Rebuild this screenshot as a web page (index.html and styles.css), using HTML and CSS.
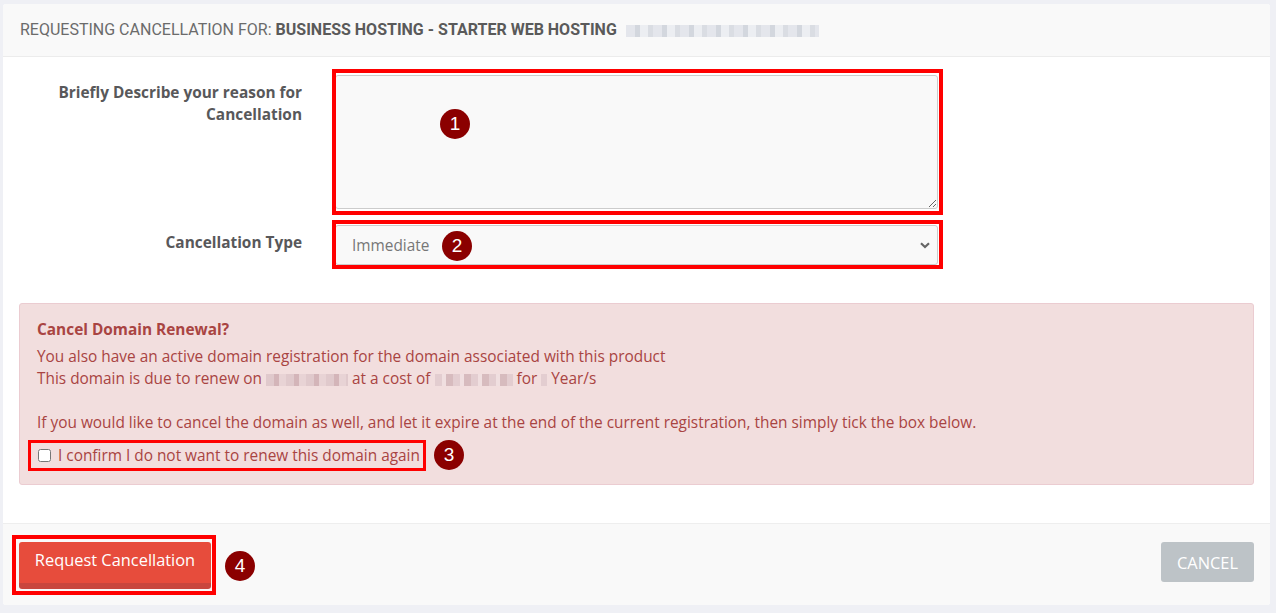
FILE: index.html
```html
<!DOCTYPE html>
<html lang="en">
<head>
    <meta charset="UTF-8">
    <title>Request Cancellation</title>
    <link rel="stylesheet" href="styles.css">
</head>
<body>
    <div class="page">
        <div class="panel">
            <div class="panel-head">
                REQUESTING CANCELLATION FOR: <strong>BUSINESS HOSTING - STARTER WEB HOSTING</strong>
                <span class="redact redact-head"></span>
            </div>

            <form class="panel-body">
                <div class="form-row">
                    <label class="form-label" for="reason">Briefly Describe your reason for Cancellation</label>
                    <div class="field">
                        <textarea id="reason" class="form-control"></textarea>
                        <span class="mark-box box-reason"></span>
                        <span class="marker marker-1">1</span>
                    </div>
                </div>

                <div class="form-row row-type">
                    <label class="form-label" for="type">Cancellation Type</label>
                    <div class="field">
                        <select id="type" class="form-control select">
                            <option>Immediate</option>
                            <option>End of Billing Period</option>
                        </select>
                        <svg class="chevron" width="10" height="7" viewBox="0 0 10 7">
                            <path d="M1 1.2 L5 5 L9 1.2" fill="none" stroke="#666" stroke-width="2.2"/>
                        </svg>
                        <span class="mark-box box-type"></span>
                        <span class="marker marker-2">2</span>
                    </div>
                </div>

                <div class="alert">
                    <h4>Cancel Domain Renewal?</h4>
                    <p>
                        You also have an active domain registration for the domain associated with this product<br>
                        This domain is due to renew on <span class="redact redact-date"></span> at a cost of <span class="redact redact-cost"></span> for <span class="redact redact-year"></span> Year/s<br>
                        <br>
                        If you would like to cancel the domain as well, and let it expire at the end of the current registration, then simply tick the box below.
                    </p>
                    <div class="confirm-row">
                        <label class="confirm">
                            <input type="checkbox"> I confirm I do not want to renew this domain again
                            <span class="mark-box box-confirm"></span>
                        </label>
                        <span class="marker marker-3">3</span>
                    </div>
                </div>
            </form>

            <div class="panel-foot">
                <div class="submit-wrap">
                    <button type="button" class="btn-danger">Request Cancellation</button>
                    <span class="mark-box box-submit"></span>
                </div>
                <span class="marker marker-4">4</span>
                <button type="button" class="btn-cancel">CANCEL</button>
            </div>
        </div>
    </div>
</body>
</html>
```

FILE: styles.css
```css
body {
    margin: 0;
    background-color: #eff0f5;
    font-family: 'Open Sans', sans-serif;
    font-size: 15.4px;
    color: #555;
}
.page {
    padding: 4px 6px 9px 3px;
}
.panel {
    background: white;
    border-radius: 3px;
    overflow: hidden;
}
.panel-head {
    height: 52px;
    line-height: 52px;
    padding: 0 17px;
    background-color: #f9f9f9;
    border-bottom: 1px solid #ececec;
    font-family: 'Roboto', sans-serif;
    font-size: 16px;
    color: #6b6b6b;
    white-space: nowrap;
}
.panel-head strong {
    color: #5a5a5a;
}
.redact {
    display: inline-block;
    height: 12px;
    vertical-align: middle;
}
.redact-head {
    width: 193px;
    margin-left: 5px;
    background: repeating-linear-gradient(90deg, #e4e6ec 0 9px, #d3d7de 9px 14px, #eceef2 14px 22px, #dadde3 22px 27px);
}
.panel-body {
    padding: 18px 16px 38px;
}
.form-row {
    display: grid;
    grid-template-columns: 299px 603px;
    column-gap: 33px;
    margin-left: -16px;
}
.row-type {
    margin-top: 16px;
}
.form-label {
    padding-top: 7px;
    text-align: right;
    font-weight: bold;
    line-height: 22px;
    color: #58585a;
}
.field {
    position: relative;
}
.form-control {
    display: block;
    box-sizing: border-box;
    width: 100%;
    margin: 0;
    background-color: #f9f9f9;
    border: 1px solid #ccc;
    border-radius: 3px;
    font-family: 'Open Sans', sans-serif;
    font-size: 15.4px;
    color: #777;
}
textarea.form-control {
    height: 134px;
}
.select {
    height: 40px;
    padding: 0 16px;
    appearance: none;
}
.chevron {
    position: absolute;
    right: 8px;
    top: 17px;
}
.mark-box {
    position: absolute;
    border: 4px solid #ff0000;
    pointer-events: none;
}
.box-reason {
    inset: -6px -5px -6px -3px;
}
.box-type {
    inset: -5px -5px -4px -3px;
}
.marker {
    display: inline-flex;
    align-items: center;
    justify-content: center;
    flex-shrink: 0;
    width: 30px;
    height: 30px;
    border-radius: 50%;
    background-color: #8b0000;
    color: white;
    font-family: 'Liberation Sans', sans-serif;
    font-size: 19px;
}
.marker-1 {
    position: absolute;
    left: 105px;
    top: 34px;
}
.marker-2 {
    position: absolute;
    left: 107px;
    top: 6px;
}
.alert {
    margin-top: 38px;
    padding: 15px 17px 14px;
    background-color: #f2dede;
    border: 1px solid #ebccd1;
    border-radius: 3px;
    color: #a94442;
}
.alert h4 {
    margin: 0 0 5px;
    font-size: 15.4px;
    line-height: 22px;
}
.alert p {
    margin: 0 0 6px;
    line-height: 22px;
}
.redact-date {
    width: 82px;
    background: repeating-linear-gradient(90deg, #e0c9cc 0 8px, #d4b5b9 8px 13px, #e8d3d5 13px 20px);
}
.redact-cost {
    width: 78px;
    background: repeating-linear-gradient(90deg, #e3cdd0 0 7px, #f0dfe0 7px 11px, #d7bbbe 11px 18px);
}
.redact-year {
    width: 6px;
    background: #e3cdd0;
}
.confirm-row {
    display: flex;
    align-items: center;
    gap: 10px;
}
.confirm {
    position: relative;
    display: inline-flex;
    align-items: center;
    gap: 7px;
    padding: 0 4px 0 1px;
    line-height: 23px;
}
.confirm input {
    width: 13px;
    height: 13px;
    margin: 0;
}
.box-confirm {
    inset: -4px -2px -4px -9px;
    border-width: 3px;
}
.panel-foot {
    display: flex;
    align-items: flex-start;
    padding: 18px 16px 16px;
    background-color: #f9f9f9;
    border-top: 1px solid #eeeeee;
}
.submit-wrap {
    position: relative;
}
.box-submit {
    inset: -7px -5px -6px -7px;
}
.btn-danger, .btn-cancel {
    font-family: 'Open Sans', sans-serif;
    font-size: 16.4px;
    color: white;
    border: none;
    border-radius: 3px;
    cursor: pointer;
}
.btn-danger {
    width: 192px;
    height: 47px;
    padding: 0 0 6px;
    background-color: #e74c3c;
    border-bottom: 6px solid #c9463d;
}
.marker-4 {
    margin: 9px 0 0 14px;
}
.btn-cancel {
    margin-left: auto;
    width: 93px;
    height: 40px;
    background-color: #bdc3c7;
}
```
